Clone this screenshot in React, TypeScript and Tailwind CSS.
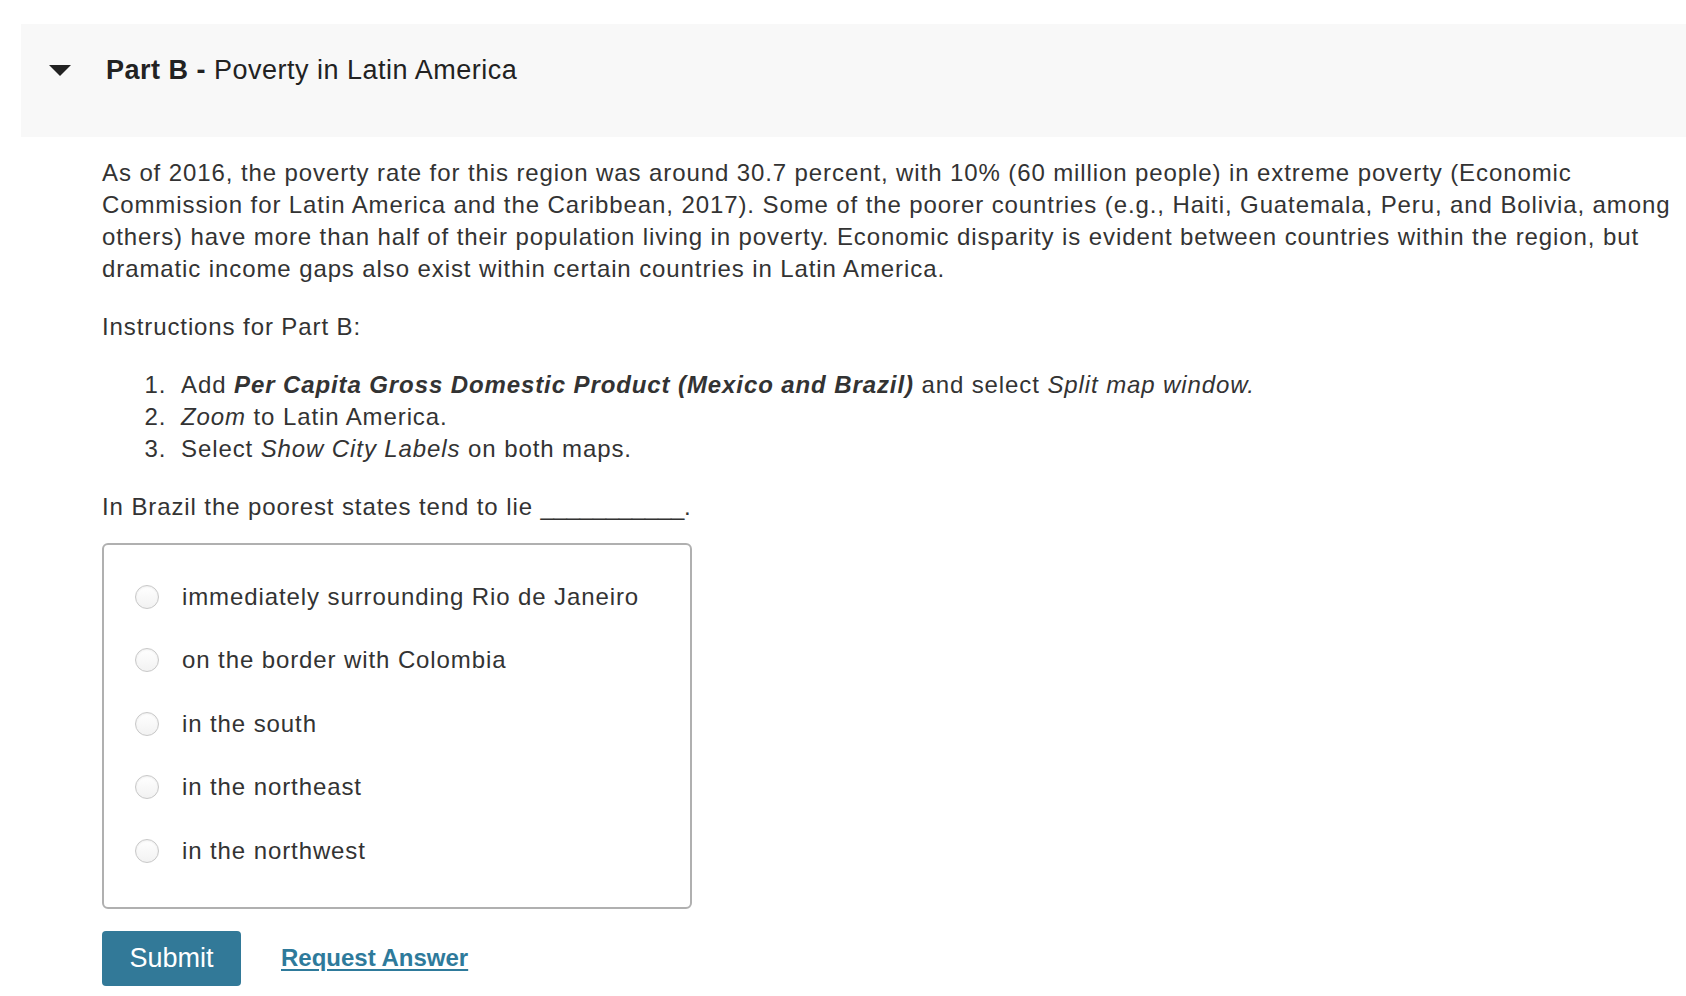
import { useState } from 'react'

const options = [
  'immediately surrounding Rio de Janeiro',
  'on the border with Colombia',
  'in the south',
  'in the northeast',
  'in the northwest',
]

function Radio({ checked }: { checked: boolean }) {
  return (
    <span className="flex h-[24px] w-[24px] shrink-0 items-center justify-center rounded-full border border-[#c8c8c8] bg-gradient-to-b from-white to-[#f2f2f2] shadow-[inset_0_1px_2px_rgba(0,0,0,0.07)]">
      {checked ? <span className="h-[10px] w-[10px] rounded-full bg-[#333]" /> : null}
    </span>
  )
}

export default function App() {
  const [selected, setSelected] = useState<number | null>(null)

  return (
    <div className="min-h-screen bg-white pt-[24px] pl-[21px] font-['Liberation_Sans',Arial,sans-serif] text-[#333]">
      <div className="flex h-[113px] items-start bg-[#f8f8f8] pt-[28px]">
        <svg className="ml-[28px] mt-[13px] h-[11px] w-[22px]" viewBox="0 0 22 11">
          <path d="M0 0 L22 0 L11 11 Z" fill="#222" />
        </svg>
        <h2 className="ml-[35px] text-[27px] leading-[36px] tracking-[0.5px] text-[#222]">
          <span className="font-bold">Part B -</span> Poverty in Latin America
        </h2>
      </div>

      <div className="pl-[81px] pr-[8px] text-[24px] leading-[32px] tracking-[0.9px]">
        <p className="mt-[20px]">
          As of 2016, the poverty rate for this region was around 30.7 percent, with 10% (60 million people) in extreme
          poverty (Economic Commission for Latin America and the Caribbean, 2017). Some of the poorer countries (e.g.,
          Haiti, Guatemala, Peru, and Bolivia, among others) have more than half of their population living in poverty.
          Economic disparity is evident between countries within the region, but dramatic income gaps also exist within
          certain countries in Latin America.
        </p>

        <p className="mt-[26px]">Instructions for Part B:</p>

        <ol className="mt-[26px] list-decimal pl-[72px]">
          <li className="pl-[7px]">
            Add <b className="italic">Per Capita Gross Domestic Product (Mexico and Brazil)</b> and select{' '}
            <i>Split map window.</i>
          </li>
          <li className="pl-[7px]">
            <i>Zoom</i> to Latin America.
          </li>
          <li className="pl-[7px]">
            Select <i>Show City Labels</i> on both maps.
          </li>
        </ol>

        <p className="mt-[26px]">
          In Brazil the poorest states tend to lie <span className="tracking-[-0.3px]">___________</span>.
        </p>

        <div className="mt-[20px] w-[590px] rounded-[6px] border-2 border-[#b0b0b0] px-[31px] pt-[20px] pb-[24px]">
          {options.map((opt, i) => (
            <label
              key={opt}
              className="flex h-[63.5px] cursor-pointer items-center gap-[23px]"
              onClick={() => setSelected(i)}
            >
              <Radio checked={selected === i} />
              <span>{opt}</span>
            </label>
          ))}
        </div>

        <div className="mt-[22px] flex items-center gap-[40px] tracking-normal">
          <button className="h-[55px] w-[139px] rounded-[4px] bg-[#327998] text-[27px] text-white">Submit</button>
          <a href="#" className="text-[24px] font-bold text-[#2e7a9b] underline underline-offset-[3px]">
            Request Answer
          </a>
        </div>
      </div>
    </div>
  )
}
